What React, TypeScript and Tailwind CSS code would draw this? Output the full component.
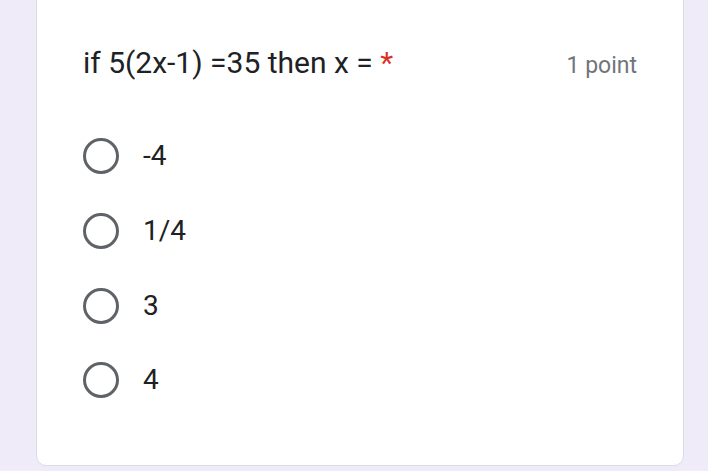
import React from "react";

const options = ["-4", "1/4", "3", "4"];

export default function App() {
  return (
    <div
      className="h-[471px] w-[708px] overflow-hidden bg-[#f0ebf8] pl-[36px]"
      style={{ fontFamily: "Roboto, 'Liberation Sans', sans-serif" }}
    >
      <div className="-mt-[10px] h-[476px] w-[648px] rounded-[10px] border border-[#dadce0] bg-white px-[46px] pt-[54px]">
        <div className="flex items-baseline justify-between">
          <div className="text-[30px] leading-[36px] text-[#202124]">
            if 5(2x-1) =35 then x = <span className="text-[#d93025]">*</span>
          </div>
          <div className="text-[23px] leading-[36px] text-[#70757a]">1 point</div>
        </div>
        <div className="mt-[35px] flex flex-col">
          {options.map((o) => (
            <div key={o} className="flex h-[74.7px] items-center">
              <div className="h-[36px] w-[36px] shrink-0 rounded-full border-[3px] border-[#5f6368]" />
              <div className="ml-[24px] text-[28px] leading-[36px] text-[#202124]">{o}</div>
            </div>
          ))}
        </div>
      </div>
    </div>
  );
}
